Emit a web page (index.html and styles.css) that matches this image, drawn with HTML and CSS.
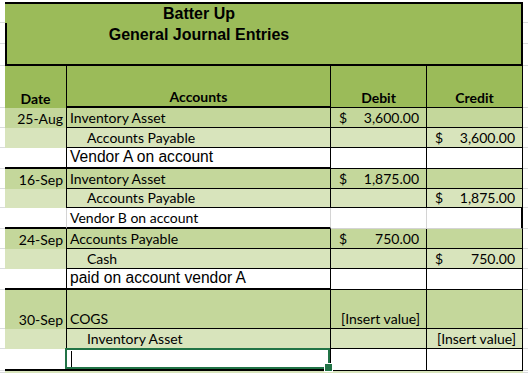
FILE: index.html
```html
<!DOCTYPE html>
<html lang="en">
<head>
<meta charset="utf-8">
<title>Batter Up - General Journal Entries</title>
<link rel="stylesheet" href="styles.css">
</head>
<body>
<div class="sheet">
  <div class="row t t1">
    <div class="gut"></div><div class="x a"></div><div class="x b ttl">Batter Up</div><div class="x c"></div><div class="x d"></div><div class="gut"></div>
  </div>
  <div class="row t t2">
    <div class="gut"></div><div class="x a"></div><div class="x b ttl">General Journal Entries</div><div class="x c"></div><div class="x d"></div><div class="gut"></div>
  </div>
  <div class="row t t3">
    <div class="gut"></div><div class="x a"></div><div class="x b"></div><div class="x c"></div><div class="x d"></div><div class="gut"></div>
  </div>
  <div class="row head">
    <div class="gut"></div><div class="x a">Date</div><div class="x b">Accounts</div><div class="x c">Debit</div><div class="x d">Credit</div><div class="gut"></div>
  </div>

  <div class="row mid h20">
    <div class="gut"></div><div class="x a">25-Aug</div><div class="x b">Inventory Asset</div><div class="x c money"><span>$</span><span>3,600.00</span></div><div class="x d"></div><div class="gut"></div>
  </div>
  <div class="row lt h20">
    <div class="gut"></div><div class="x a"></div><div class="x b ind">Accounts Payable</div><div class="x c"></div><div class="x d money"><span>$</span><span>3,600.00</span></div><div class="gut"></div>
  </div>
  <div class="row wh h21 thick">
    <div class="gut"></div><div class="x a"></div><div class="x b arial">Vendor A on account</div><div class="x c"></div><div class="x d"></div><div class="gut"></div>
  </div>

  <div class="row mid h20">
    <div class="gut"></div><div class="x a">16-Sep</div><div class="x b">Inventory Asset</div><div class="x c money"><span>$</span><span>1,875.00</span></div><div class="x d"></div><div class="gut"></div>
  </div>
  <div class="row lt h19">
    <div class="gut"></div><div class="x a"></div><div class="x b ind">Accounts Payable</div><div class="x c"></div><div class="x d money"><span>$</span><span>1,875.00</span></div><div class="gut"></div>
  </div>
  <div class="row wh h21 thick soft">
    <div class="gut"></div><div class="x a"></div><div class="x b">Vendor B on account</div><div class="x c"></div><div class="x d"></div><div class="gut"></div>
  </div>

  <div class="row mid h20">
    <div class="gut"></div><div class="x a">24-Sep</div><div class="x b">Accounts Payable</div><div class="x c money"><span>$</span><span>750.00</span></div><div class="x d"></div><div class="gut"></div>
  </div>
  <div class="row lt h20">
    <div class="gut"></div><div class="x a"></div><div class="x b ind">Cash</div><div class="x c"></div><div class="x d money"><span>$</span><span>750.00</span></div><div class="gut"></div>
  </div>
  <div class="row wh h21 thick">
    <div class="gut"></div><div class="x a"></div><div class="x b arial">paid on account vendor A</div><div class="x c"></div><div class="x d"></div><div class="gut"></div>
  </div>

  <div class="row mid h39">
    <div class="gut"></div><div class="x a">30-Sep</div><div class="x b">COGS</div><div class="x c ins">[Insert value]</div><div class="x d"></div><div class="gut"></div>
  </div>
  <div class="row lt h20">
    <div class="gut"></div><div class="x a"></div><div class="x b ind">Inventory Asset</div><div class="x c"></div><div class="x d ins">[Insert value]</div><div class="gut"></div>
  </div>
  <div class="row wh h22 thick">
    <div class="gut"></div><div class="x a"></div><div class="x b sel"><span class="caret"></span></div><div class="x c"></div><div class="x d"></div><div class="gut"></div>
  </div>
  <div class="row lt tail">
    <div class="gut"></div><div class="x a"></div><div class="x b"></div><div class="x c"></div><div class="x d"></div><div class="gut"></div>
  </div>
</div>
</body>
</html>
```

FILE: styles.css
```css
* { box-sizing: border-box; }

body {
  margin: 0;
  background: #ffffff;
  color: #000000;
  font-family: Lato, "Liberation Sans", sans-serif;
  font-size: 14px;
}

.sheet {
  width: 528px;
  padding-top: 2px;
}

.row {
  display: grid;
  grid-template-columns: 5px 62px 264px 96px 96px 5px;
}

.gut {
  background: #ffffff;
  border-bottom: 1px solid #dadcdd;
}

.x {
  display: flex;
  align-items: flex-end;
  line-height: 16px;
  padding-bottom: 1px;
  white-space: nowrap;
  overflow: hidden;
  border-right: 1px solid #000;
}

.x.b, .x.c, .x.d { border-bottom: 1px solid #000; }

.x.a { justify-content: flex-end; padding-right: 3px; }
.x.b { padding-left: 3px; }
.x.b.ind { padding-left: 20px; }

.money { justify-content: space-between; padding-left: 8px; padding-right: 7px; }
.ins { justify-content: flex-end; padding-right: 6px; }

.x.arial {
  font-family: "Liberation Sans", Arial, sans-serif;
  font-size: 15.6px;
  line-height: 18px;
  padding-bottom: 1px;
}

/* row fills */
.mid .x { background: #c4d79b; }
.lt .x { background: #d8e4bc; }
.wh .x { background: #ffffff; }

/* row heights */
.h19 { height: 19px; }
.h20 { height: 20px; }
.h21 { height: 21px; }
.h22 { height: 22px; }
.h39 { height: 39px; }
.tail { height: 2px; }
.tail .x { border: none; }

.thick .x.a, .thick .x.b { border-bottom: 2px solid #000; }

.soft .x.a, .soft .x.b, .soft .x.c { border-right-color: #d4d4d4; }
.soft .x.c { border-bottom-color: #d4d4d4; }
.soft .x.d { border-bottom-color: #d4d4d4; border-right: 2px solid #000; }

/* title block */
.t .x {
  background: #9bbb59;
  border: none;
}
.t1 { height: 21px; }
.t2 { height: 21px; }
.t3 { height: 22px; }
.t1 .x { border-top: 2px solid #000; }
.t .x.d { border-right: 2px solid #000; }
.t2 .x.a, .t3 .x.a { border-left: 2px solid #000; }
.t3 .x { border-bottom: 2px solid #000; }

.x.ttl {
  justify-content: center;
  font-family: "Liberation Sans", Arial, sans-serif;
  font-weight: bold;
  font-size: 16px;
  line-height: 18px;
  padding-bottom: 0;
  padding-left: 0;
}

/* header */
.head { height: 42px; }
.head .x {
  background: #9bbb59;
  font-weight: bold;
  justify-content: center;
  padding-left: 0;
  padding-right: 0;
}
.head .x.b { border-bottom: 2px solid #000; }

/* selected cell */
.sel { position: relative; overflow: visible; }
.sel::after {
  content: "";
  position: absolute;
  left: -2px;
  top: -1px;
  right: 0;
  bottom: 0;
  border: 2px solid #217346;
}
.sel::before {
  content: "";
  position: absolute;
  right: -3px;
  bottom: -3px;
  width: 7px;
  height: 7px;
  background: #217346;
  border: 1px solid #ffffff;
  z-index: 2;
}
.caret {
  display: block;
  width: 1px;
  height: 16px;
  background: #000;
  margin-left: 1px;
  margin-bottom: 1px;
}
```
